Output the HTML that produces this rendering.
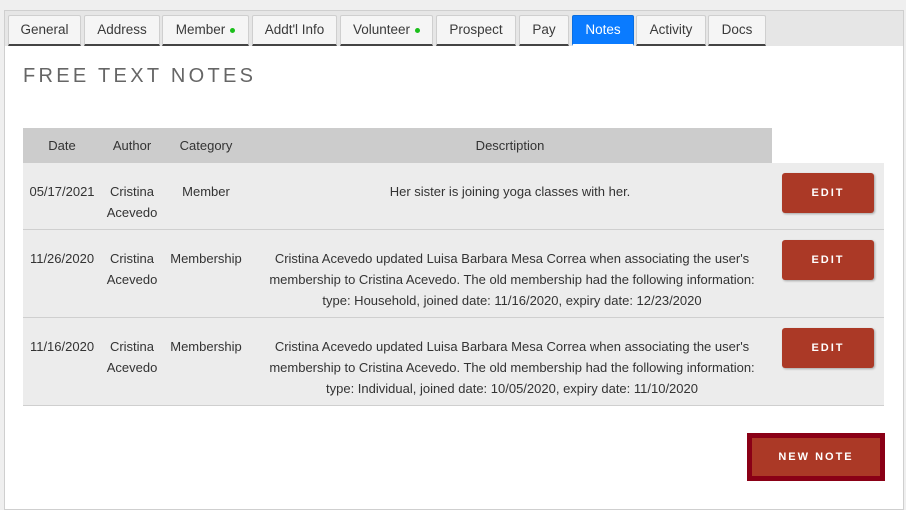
<!DOCTYPE html>
<html><head><meta charset="utf-8"><style>
*{margin:0;padding:0;box-sizing:border-box}
body{width:906px;height:493px;background:#efefef;font-family:"Liberation Sans",Arial,sans-serif;color:#333;position:relative;overflow:hidden;font-size:13px}
.panel{position:absolute;left:4px;top:10px;width:900px;height:500px;border:1px solid #cfcfcf;background:#fff}
.strip{position:absolute;left:5px;top:11px;width:898px;height:35px;background:#e6e6e6}
.tab{position:absolute;top:15px;height:31px;background:#f5f5f5;border:1px solid #cfcfcf;border-bottom:2px solid #444;border-radius:2px 2px 0 0;text-align:center;line-height:28px;font-size:13.5px;color:#3a3a3a}
.tab.act{background:#0a7bff;color:#fff;border-color:#0a6ee0;border-bottom:2px solid #fff}
.dot{display:inline-block;width:5px;height:5px;border-radius:50%;background:#1bbf1b;margin-left:5px;vertical-align:middle}
h1{position:absolute;left:23px;top:65px;font-weight:normal;font-size:20px;letter-spacing:3.3px;color:#666}
.hdr{position:absolute;left:23px;top:128px;width:749px;height:35px;background:#cccccc}
.row{position:absolute;left:23px;width:861px;background:#ececec;border-bottom:1px solid #cfcfcf}
.c{position:absolute;text-align:center;line-height:21px;white-space:nowrap;transform:translateX(-50%)}
.btn{position:absolute;left:782px;width:92px;height:40px;background:#ab3926;border-radius:3px;color:#fff;font-weight:bold;font-size:11px;letter-spacing:2px;text-align:center;line-height:40px;box-shadow:1px 1px 2px rgba(0,0,0,.3)}
.new{position:absolute;left:747px;top:433px;width:138px;height:48px;background:#ab3926;border:5px solid #8a0016;color:#fff;font-weight:bold;font-size:11px;letter-spacing:2px;text-align:center;line-height:38px}
</style></head><body>
<div class="panel"></div>
<div class="strip"></div>
<div class="tab" style="left:8px;width:73px">General</div>
<div class="tab" style="left:84px;width:76px">Address</div>
<div class="tab" style="left:162px;width:87px">Member<span class="dot"></span></div>
<div class="tab" style="left:252px;width:85px">Addt'l Info</div>
<div class="tab" style="left:340px;width:93px">Volunteer<span class="dot"></span></div>
<div class="tab" style="left:436px;width:80px">Prospect</div>
<div class="tab" style="left:519px;width:50px">Pay</div>
<div class="tab act" style="left:572px;width:62px">Notes</div>
<div class="tab" style="left:636px;width:70px">Activity</div>
<div class="tab" style="left:708px;width:58px">Docs</div>
<h1>FREE TEXT NOTES</h1>
<div class="hdr"></div>
<div class="c" style="left:62px;top:135px">Date</div>
<div class="c" style="left:132px;top:135px">Author</div>
<div class="c" style="left:206px;top:135px">Category</div>
<div class="c" style="left:510px;top:135px">Descrtiption</div>

<div class="row" style="top:163px;height:67px"></div>
<div class="c" style="left:62px;top:181px">05/17/2021</div>
<div class="c" style="left:132px;top:181px">Cristina<br>Acevedo</div>
<div class="c" style="left:206px;top:181px">Member</div>
<div class="c" style="left:510px;top:181px">Her sister is joining yoga classes with her.</div>
<div class="btn" style="top:173px">EDIT</div>

<div class="row" style="top:230px;height:88px"></div>
<div class="c" style="left:62px;top:248px">11/26/2020</div>
<div class="c" style="left:132px;top:248px">Cristina<br>Acevedo</div>
<div class="c" style="left:206px;top:248px">Membership</div>
<div class="c" style="left:512px;top:248px">Cristina Acevedo updated Luisa Barbara Mesa Correa when associating the user's<br>membership to Cristina Acevedo. The old membership had the following information:<br>type: Household, joined date: 11/16/2020, expiry date: 12/23/2020</div>
<div class="btn" style="top:240px">EDIT</div>

<div class="row" style="top:318px;height:88px"></div>
<div class="c" style="left:62px;top:336px">11/16/2020</div>
<div class="c" style="left:132px;top:336px">Cristina<br>Acevedo</div>
<div class="c" style="left:206px;top:336px">Membership</div>
<div class="c" style="left:512px;top:336px">Cristina Acevedo updated Luisa Barbara Mesa Correa when associating the user's<br>membership to Cristina Acevedo. The old membership had the following information:<br>type: Individual, joined date: 10/05/2020, expiry date: 11/10/2020</div>
<div class="btn" style="top:328px">EDIT</div>

<div class="new">NEW NOTE</div>
</body></html>
